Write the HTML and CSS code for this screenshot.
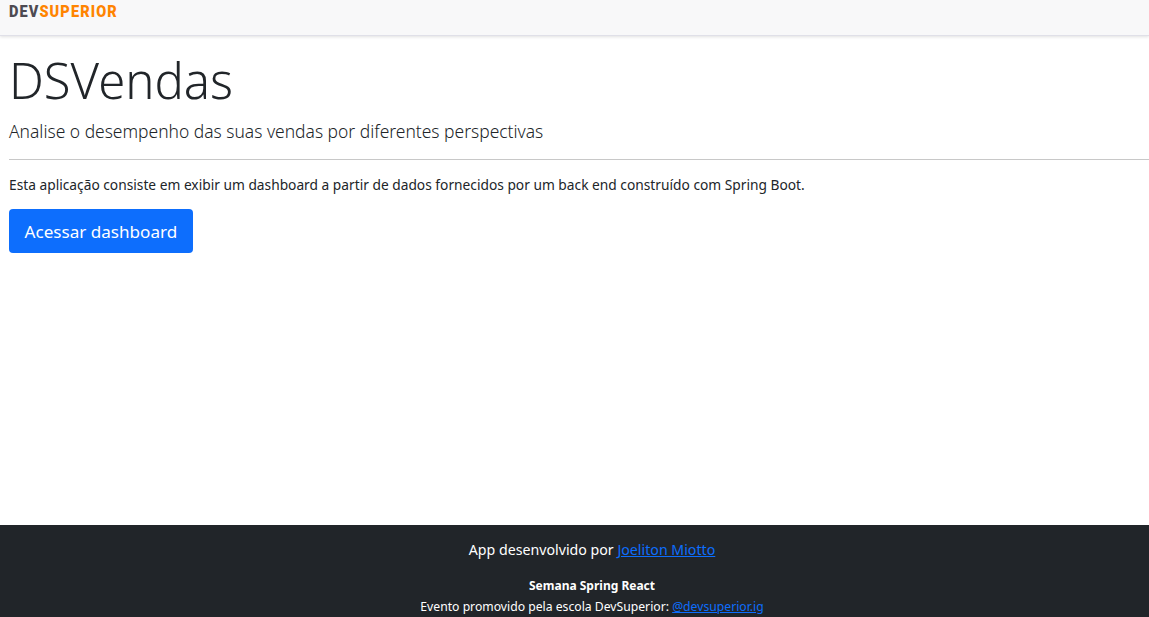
FILE: index.html
```html
<!DOCTYPE html>
<html lang="pt-BR">
<head>
<meta charset="utf-8">
<title>DSVendas</title>
<link rel="stylesheet" href="styles.css">
</head>
<body>
<div class="page">
  <header class="navbar">
    <a class="logo" href="#"><span class="logo-dev">DEV</span><span class="logo-sup">SUPERIOR</span></a>
  </header>
  <main class="main">
    <h1 class="title">DSVendas</h1>
    <p class="lead">Analise o desempenho das suas vendas por diferentes perspectivas</p>
    <hr class="rule">
    <p class="intro">Esta aplicação consiste em exibir um dashboard a partir de dados fornecidos por um back end construído com Spring Boot.</p>
    <a class="btn" href="#">Acessar dashboard</a>
  </main>
  <footer class="footer">
    <p class="credit">App desenvolvido por <a href="#">Joeliton Miotto</a></p>
    <p class="event-name">Semana Spring React</p>
    <p class="event-line">Evento promovido pela escola DevSuperior: <a href="#">@devsuperior.ig</a></p>
  </footer>
</div>
</body>
</html>
```
FILE: styles.css
```css
* { box-sizing: border-box; }
html, body { margin: 0; height: 100%; overflow: hidden; }
body { font-family: "Noto Sans", "Open Sans", sans-serif; color: #212529; background: #fff; }
.page { height: 617px; display: flex; flex-direction: column; }
.navbar { height: 36px; flex: none; background: #f8f8f9; padding: 0 9px; box-shadow: 0 1px 3px rgba(0,0,0,.12); border-bottom: 1px solid #e0e0e8; }
.logo { display: inline-block; font-family: "Roboto", sans-serif; font-weight: 900; font-size: 16.5px; line-height: 20px; letter-spacing: 1.25px; text-decoration: none; white-space: nowrap; transform: scaleX(.88); transform-origin: left center; }
.logo-dev { color: #4d4a52; }
.logo-sup { color: #ff8400; }
.main { flex: 1; padding: 0 0 0 9px; }
.title { margin: 0; padding-top: 10px; font-size: 49px; font-weight: 300; line-height: 68px; }
.lead { margin: 0; font-size: 17.45px; font-weight: 300; line-height: 26px; padding-top: 4px; }
.rule { margin: 15px 0 15px; border: 0; border-top: 1px solid #c8c8c8; }
.intro { margin: 0; font-size: 13.75px; line-height: 20px; }
.btn { display: inline-block; margin-top: 14px; padding: 1px 15.5px 0; height: 44px; line-height: 43px; background: #0d6efd; color: #fff; border-radius: 4px; font-size: 17.1px; text-decoration: none; }
.footer { height: 92px; flex: none; background: #212529; color: #fff; text-align: center; overflow: hidden; padding-left: 35px; }
.footer p { margin: 0; }
.footer a { color: #0d6efd; }
.credit { font-size: 14.2px; line-height: 20px; padding-top: 15px; }
.event-name { font-size: 12px; font-weight: 700; line-height: 18px; padding-top: 17px; }
.event-line { font-size: 12.2px; line-height: 18px; padding-top: 3px; }
```
